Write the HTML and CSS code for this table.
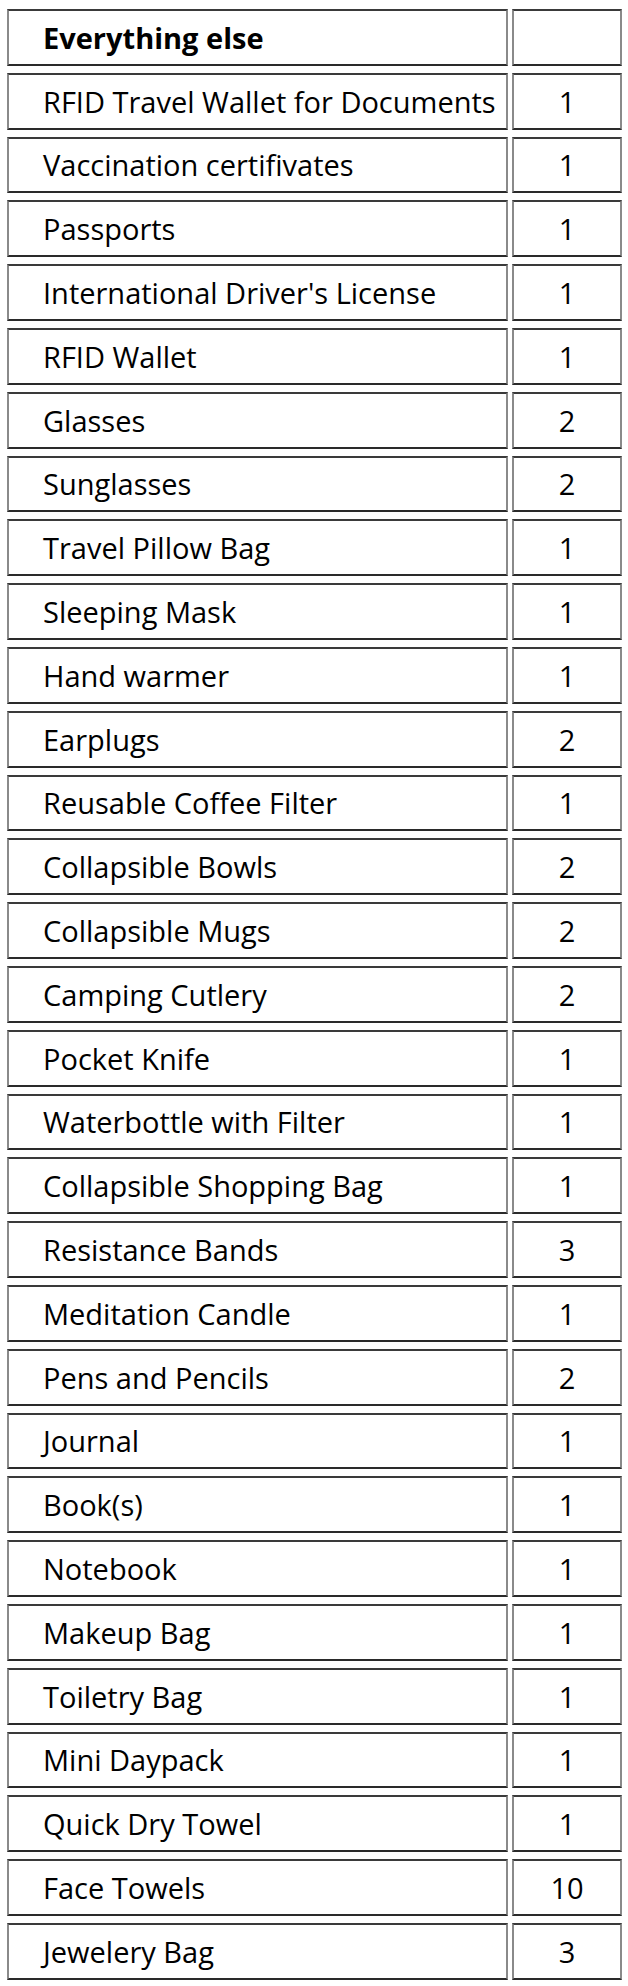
FILE: index.html
```html
<!DOCTYPE html>
<html>
<head>
<meta charset="utf-8">
<link rel="stylesheet" href="styles.css">
</head>
<body>
<table class="pack">
<tbody>
<tr><td class="item head">Everything else</td><td class="qty"></td></tr>
<tr><td class="item">RFID Travel Wallet for Documents</td><td class="qty">1</td></tr>
<tr><td class="item">Vaccination certifivates</td><td class="qty">1</td></tr>
<tr><td class="item">Passports</td><td class="qty">1</td></tr>
<tr><td class="item">International Driver's License</td><td class="qty">1</td></tr>
<tr><td class="item">RFID Wallet</td><td class="qty">1</td></tr>
<tr><td class="item">Glasses</td><td class="qty">2</td></tr>
<tr><td class="item">Sunglasses</td><td class="qty">2</td></tr>
<tr><td class="item">Travel Pillow Bag</td><td class="qty">1</td></tr>
<tr><td class="item">Sleeping Mask</td><td class="qty">1</td></tr>
<tr><td class="item">Hand warmer</td><td class="qty">1</td></tr>
<tr><td class="item">Earplugs</td><td class="qty">2</td></tr>
<tr><td class="item">Reusable Coffee Filter</td><td class="qty">1</td></tr>
<tr><td class="item">Collapsible Bowls</td><td class="qty">2</td></tr>
<tr><td class="item">Collapsible Mugs</td><td class="qty">2</td></tr>
<tr><td class="item">Camping Cutlery</td><td class="qty">2</td></tr>
<tr><td class="item">Pocket Knife</td><td class="qty">1</td></tr>
<tr><td class="item">Waterbottle with Filter</td><td class="qty">1</td></tr>
<tr><td class="item">Collapsible Shopping Bag</td><td class="qty">1</td></tr>
<tr><td class="item">Resistance Bands</td><td class="qty">3</td></tr>
<tr><td class="item">Meditation Candle</td><td class="qty">1</td></tr>
<tr><td class="item">Pens and Pencils</td><td class="qty">2</td></tr>
<tr><td class="item">Journal</td><td class="qty">1</td></tr>
<tr><td class="item">Book(s)</td><td class="qty">1</td></tr>
<tr><td class="item">Notebook</td><td class="qty">1</td></tr>
<tr><td class="item">Makeup Bag</td><td class="qty">1</td></tr>
<tr><td class="item">Toiletry Bag</td><td class="qty">1</td></tr>
<tr><td class="item">Mini Daypack</td><td class="qty">1</td></tr>
<tr><td class="item">Quick Dry Towel</td><td class="qty">1</td></tr>
<tr><td class="item">Face Towels</td><td class="qty">10</td></tr>
<tr><td class="item">Jewelery Bag</td><td class="qty">3</td></tr>
</tbody>
</table>
</body>
</html>
```

FILE: styles.css
```css
html, body {
  margin: 0;
  padding: 0;
  background: #ffffff;
}

body {
  font-family: "Open Sans", "Liberation Sans", sans-serif;
  color: #000000;
}

.pack {
  border-collapse: separate;
  border-spacing: 4px 7px;
  margin: 2px 0 0 3px;
  width: 623px;
  table-layout: fixed;
}

.pack td {
  box-sizing: border-box;
  height: 56.8px;
  border-style: solid;
  border-width: 2px;
  border-color: #3a3a3a #8a8a8a #2a2a2a #8a8a8a;
  font-size: 29px;
  line-height: 36px;
  vertical-align: middle;
  padding: 0;
}

.pack .item {
  width: 501px;
  padding-left: 34px;
  padding-top: 1px;
  white-space: nowrap;
}

.pack .head {
  font-weight: 700;
}

.pack .qty {
  width: 110px;
  text-align: center;
  padding-top: 1px;
}
```
